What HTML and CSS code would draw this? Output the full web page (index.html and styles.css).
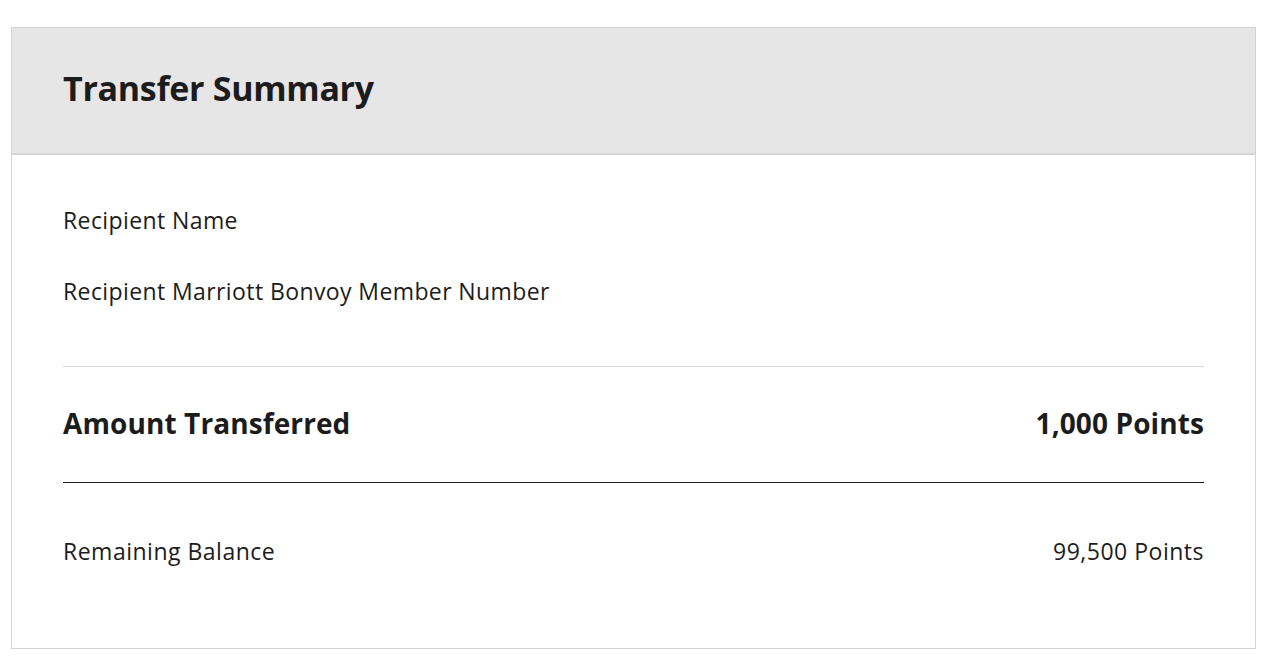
FILE: index.html
```html
<!DOCTYPE html>
<html lang="en">
<head>
  <meta charset="UTF-8">
  <meta name="viewport" content="width=device-width, initial-scale=1.0">
  <title>Transfer Summary</title>
  <link rel="stylesheet" href="styles.css">
</head>
<body>
  <div class="page">
    <section class="summary">
      <header class="summary-head">
        <h2>Transfer Summary</h2>
      </header>
      <div class="summary-body">
        <div class="recipient">
          <p class="field">Recipient Name</p>
          <p class="field">Recipient Marriott Bonvoy Member Number</p>
        </div>
        <div class="line total">
          <span>Amount Transferred</span>
          <span>1,000 Points</span>
        </div>
        <div class="line balance">
          <span>Remaining Balance</span>
          <span>99,500 Points</span>
        </div>
      </div>
    </section>
  </div>
</body>
</html>
```

FILE: styles.css
```css
body {
  margin: 0;
  background: #fff;
  color: #1c1c1c;
  font-family: "Open Sans", Arial, sans-serif;
}
.page {
  padding: 27px 16px 0 11px;
}
.summary {
  border: 1px solid #d3d3d3;
}
.summary-head {
  height: 125px;
  display: flex;
  align-items: center;
  padding: 0 51px;
  background: #e6e6e6;
  border-bottom: 2px solid #d6d6d6;
}
.summary-head h2 {
  margin: 0 0 6px;
  font-size: 34px;
  font-weight: 700;
  letter-spacing: -0.3px;
}
.summary-body {
  padding: 0 51px 82px;
}
.recipient {
  display: flex;
  flex-direction: column;
  gap: 41px;
  padding: 50px 0 60px;
  border-bottom: 1px solid #d8d8d8;
}
.field {
  margin: 0;
  font-size: 23px;
  line-height: 30px;
  letter-spacing: 0.4px;
}
.line {
  display: flex;
  justify-content: space-between;
  align-items: center;
}
.total {
  padding: 36px 0 39px;
  font-size: 28px;
  line-height: 40px;
  font-weight: 700;
  letter-spacing: 0.1px;
  border-bottom: 1px solid #1c1c1c;
}
.balance {
  padding-top: 53px;
  font-size: 23px;
  line-height: 30px;
  letter-spacing: 0.5px;
}
```
